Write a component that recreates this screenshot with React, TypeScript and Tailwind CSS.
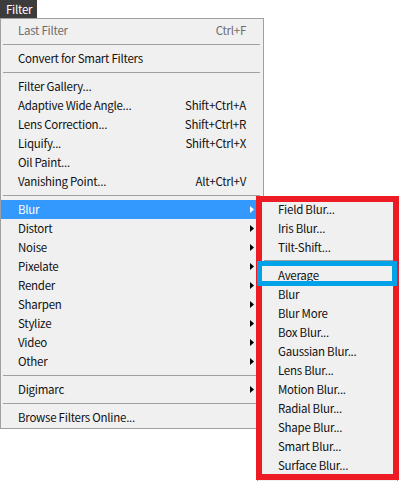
import React from "react";

type Item =
  | { kind: "item"; label: string; shortcut?: string; sub?: boolean; disabled?: boolean; active?: boolean }
  | { kind: "sep" };

const mainItems: Item[] = [
  { kind: "item", label: "Last Filter", shortcut: "Ctrl+F", disabled: true },
  { kind: "sep" },
  { kind: "item", label: "Convert for Smart Filters" },
  { kind: "sep" },
  { kind: "item", label: "Filter Gallery..." },
  { kind: "item", label: "Adaptive Wide Angle...", shortcut: "Shift+Ctrl+A" },
  { kind: "item", label: "Lens Correction...", shortcut: "Shift+Ctrl+R" },
  { kind: "item", label: "Liquify...", shortcut: "Shift+Ctrl+X" },
  { kind: "item", label: "Oil Paint..." },
  { kind: "item", label: "Vanishing Point...", shortcut: "Alt+Ctrl+V" },
  { kind: "sep" },
  { kind: "item", label: "Blur", sub: true, active: true },
  { kind: "item", label: "Distort", sub: true },
  { kind: "item", label: "Noise", sub: true },
  { kind: "item", label: "Pixelate", sub: true },
  { kind: "item", label: "Render", sub: true },
  { kind: "item", label: "Sharpen", sub: true },
  { kind: "item", label: "Stylize", sub: true },
  { kind: "item", label: "Video", sub: true },
  { kind: "item", label: "Other", sub: true },
  { kind: "sep" },
  { kind: "item", label: "Digimarc", sub: true },
  { kind: "sep" },
  { kind: "item", label: "Browse Filters Online..." },
];

const blurItems: Item[] = [
  { kind: "item", label: "Field Blur..." },
  { kind: "item", label: "Iris Blur..." },
  { kind: "item", label: "Tilt-Shift..." },
  { kind: "sep" },
  { kind: "item", label: "Average" },
  { kind: "item", label: "Blur" },
  { kind: "item", label: "Blur More" },
  { kind: "item", label: "Box Blur..." },
  { kind: "item", label: "Gaussian Blur..." },
  { kind: "item", label: "Lens Blur..." },
  { kind: "item", label: "Motion Blur..." },
  { kind: "item", label: "Radial Blur..." },
  { kind: "item", label: "Shape Blur..." },
  { kind: "item", label: "Smart Blur..." },
  { kind: "item", label: "Surface Blur..." },
];

const Arrow = ({ white }: { white?: boolean }) => (
  <svg width="4" height="7" viewBox="0 0 4 7" className="shrink-0">
    <path d="M0 0 L4 3.5 L0 7 Z" fill={white ? "#ffffff" : "#000000"} />
  </svg>
);

export default function App() {
  return (
    <div
      className="relative w-[400px] h-[481px] overflow-hidden bg-white text-[11.5px] tracking-[-0.25px] leading-[19px] text-[#111]"
      style={{ fontFamily: '"Noto Sans CJK KR", "Noto Sans", sans-serif' }}
    >
      {/* menu bar */}
      <div className="h-[18px] flex">
        <div className="w-[37px] h-[18px] bg-[#3c3c3c] text-white leading-[18px] pl-[6px]">Filter</div>
      </div>

      {/* main menu */}
      <div className="w-[264px] border border-[#a0a0a0] bg-[#f0f0f0] pt-[2px] pb-px">
        {mainItems.map((it, i) =>
          it.kind === "sep" ? (
            <div key={i} className="py-[4px] pl-[2px] pr-[3px]">
              <div className="h-px bg-[#a0a0a0]" />
            </div>
          ) : (
            <div
              key={i}
              className={`h-[19px] flex items-center pl-[17px] pr-[9px] ${
                it.active ? "bg-[#3399ff] text-white" : ""
              } ${it.disabled ? "text-[#6d6d6d]" : ""}`}
            >
              <span className="flex-1 whitespace-nowrap">{it.label}</span>
              {it.shortcut && <span className="mr-[8px] whitespace-nowrap">{it.shortcut}</span>}
              {it.sub && <Arrow white={it.active} />}
            </div>
          )
        )}
      </div>

      {/* blur submenu */}
      <div className="absolute left-[257px] top-[198px] w-[141px] h-[290px] border border-[#a0a0a0] bg-[#f0f0f0] pt-px">
        {blurItems.map((it, i) =>
          it.kind === "sep" ? (
            <div key={i} className="pt-[3px] pb-[5px] pl-[6px] pr-[4px]">
              <div className="h-px bg-[#a0a0a0]" />
            </div>
          ) : (
            <div key={i} className="h-[19px] flex items-center pl-[20px] whitespace-nowrap">
              {it.kind === "item" && it.label}
            </div>
          )
        )}
      </div>

      {/* annotation frames */}
      <div className="absolute left-[256px] top-[196px] w-[143px] h-[284px] border-[6px] border-[#ed1c24]" />
      <div className="absolute left-[257px] top-[261px] w-[140px] h-[25px] border-[5px] border-[#00a2e8]" />
    </div>
  );
}
